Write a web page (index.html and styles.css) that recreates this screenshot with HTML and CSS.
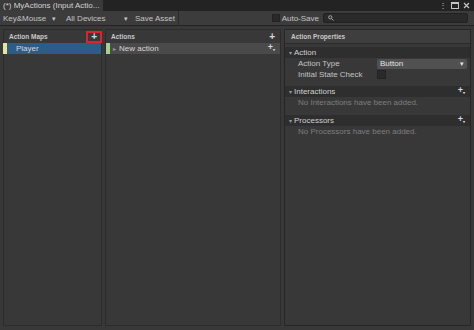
FILE: index.html
```html
<!DOCTYPE html>
<html lang="en">
<head>
    <meta charset="UTF-8">
    <title>MyActions (Input Actions)</title>
    <link rel="stylesheet" href="styles.css">
</head>
<body>
    <div class="window">
        <div class="tabbar">
            <div class="tab">(*) MyActions (Input Actio...</div>
            <div class="tab-icons">
                <span class="dots">&#8942;</span>
                <svg width="8" height="7" viewBox="0 0 8 7"><rect x="0.5" y="0.5" width="7" height="6" fill="none" stroke="#c4c4c4"/><rect x="0.5" y="0.5" width="7" height="1.5" fill="#c4c4c4"/></svg>
                <svg width="7" height="7" viewBox="0 0 7 7"><path d="M1 1L6 6M6 1L1 6" stroke="#c4c4c4" stroke-width="1.2"/></svg>
            </div>
        </div>
        <div class="toolbar">
            <div class="tool-drop scheme">Key&amp;Mouse <span class="caret">&#9662;</span></div>
            <div class="tool-drop devices">All Devices <span class="caret">&#9662;</span></div>
            <div class="tool-btn">Save Asset</div>
            <div class="spacer"></div>
            <div class="autosave"><span class="check"></span>Auto-Save</div>
            <div class="search">
                <svg width="6" height="6" viewBox="0 0 6 6"><circle cx="2.3" cy="2.3" r="1.6" fill="none" stroke="#aaa"/><path d="M3.5 3.5L5.5 5.5" stroke="#aaa"/></svg>
            </div>
        </div>
        <div class="panes">
            <div class="pane maps">
                <div class="pane-head">
                    <span>Action Maps</span>
                    <span class="plus boxed">+</span>
                </div>
                <div class="row selected">
                    <span class="mark yellow"></span>
                    <span class="row-label">Player</span>
                </div>
            </div>
            <div class="pane actions">
                <div class="pane-head">
                    <span>Actions</span>
                    <span class="plus">+</span>
                </div>
                <div class="row action-row">
                    <span class="mark green"></span>
                    <span class="arrow">&#9656;</span>
                    <span class="row-label">New action</span>
                    <span class="plus small">+<sub>&#9662;</sub></span>
                </div>
            </div>
            <div class="pane props">
                <div class="props-head">Action Properties</div>
                <div class="fold-head top"><span class="arrow">&#9662;</span>Action</div>
                <div class="field">
                    <span class="field-label">Action Type</span>
                    <div class="select">Button <span class="caret">&#9662;</span></div>
                </div>
                <div class="field">
                    <span class="field-label">Initial State Check</span>
                    <span class="check box"></span>
                </div>
                <div class="fold-head first"><span class="arrow">&#9662;</span>Interactions<span class="plus small">+<sub>&#9662;</sub></span></div>
                <div class="empty">No Interactions have been added.</div>
                <div class="fold-head"><span class="arrow">&#9662;</span>Processors<span class="plus small">+<sub>&#9662;</sub></span></div>
                <div class="empty">No Processors have been added.</div>
            </div>
        </div>
    </div>
</body>
</html>
```

FILE: styles.css
```css
body {
    margin: 0;
    background-color: #383838;
    font-family: "Liberation Sans", Arial, sans-serif;
    font-size: 8px;
    color: #c4c4c4;
}
.window {
    width: 474px;
    height: 330px;
    display: flex;
    flex-direction: column;
    overflow: hidden;
}
.tabbar {
    height: 11px;
    background-color: #232323;
    display: flex;
    align-items: stretch;
}
.tab {
    width: 100px;
    padding-left: 3px;
    background-color: #3a3a3a;
    line-height: 11px;
    color: #d2d2d2;
    white-space: nowrap;
    overflow: hidden;
}
.tab-icons {
    margin-left: auto;
    display: flex;
    align-items: center;
    gap: 4px;
    padding-right: 4px;
}
.dots {
    font-size: 8px;
    line-height: 8px;
}
.toolbar {
    height: 14px;
    background-color: #3c3c3c;
    border-bottom: 1px solid #232323;
    display: flex;
    align-items: center;
    white-space: nowrap;
}
.tool-drop {
    position: relative;
    height: 14px;
    line-height: 15px;
}
.scheme {
    width: 57px;
    padding-left: 3px;
}
.devices {
    width: 66px;
    padding-left: 6px;
}
.caret {
    position: absolute;
    right: 4px;
    font-size: 7px;
}
.tool-btn {
    padding: 0 3px;
    width: 40px;
    line-height: 15px;
    border-right: 1px solid #2a2a2a;
}
.spacer {
    flex: 1;
}
.autosave {
    display: flex;
    align-items: center;
    gap: 2px;
    padding-right: 4px;
    line-height: 15px;
}
.check {
    display: inline-block;
    width: 8px;
    height: 8px;
    background-color: #2a2a2a;
    border: 1px solid #222;
    box-sizing: border-box;
}
.search {
    width: 145px;
    height: 10px;
    margin-right: 6px;
    background-color: #2a2a2a;
    border: 1px solid #212121;
    border-radius: 2px;
    display: flex;
    align-items: center;
    padding-left: 4px;
    box-sizing: border-box;
}
.panes {
    flex: 1;
    display: flex;
    gap: 3px;
    padding: 3px 3px 4px 3px;
}
.pane {
    border: 1px solid #2c2c2c;
    background-color: #383838;
    display: flex;
    flex-direction: column;
}
.maps {
    width: 97px;
}
.actions {
    width: 174px;
}
.props {
    flex: 1;
    border-color: #262626;
}
.pane-head {
    height: 13px;
    display: flex;
    align-items: center;
    justify-content: space-between;
    padding: 0 5px;
    font-size: 6.5px;
    font-weight: bold;
    color: #c8c8c8;
}
.plus {
    font-size: 10px;
    font-weight: bold;
    line-height: 10px;
    color: #d8d8d8;
}
.plus.boxed {
    border: 2px solid #e0222a;
    padding: 0 3px;
    margin-right: -6px;
    line-height: 8px;
}
.plus.small {
    margin-left: auto;
    font-size: 9px;
}
.plus sub {
    font-size: 4px;
    vertical-align: -1px;
}
.row {
    height: 11px;
    display: flex;
    align-items: center;
}
.selected {
    background-color: #2c5d87;
    margin-left: -1px;
}
.mark {
    width: 4px;
    height: 11px;
}
.yellow {
    background-color: #e6e39a;
    margin-right: 9px;
}
.green {
    background-color: #a5d18c;
    margin-right: 3px;
}
.row-label {
    font-size: 8px;
    color: #d6d6d6;
}
.action-row {
    background-color: #4a4a4a;
    padding-right: 5px;
}
.arrow {
    font-size: 6px;
    color: #9a9a9a;
    margin-right: 3px;
}
.props-head {
    height: 13px;
    line-height: 13px;
    padding-left: 6px;
    background-color: #3e3e3e;
    border-bottom: 1px solid #2a2a2a;
    font-size: 6.5px;
    font-weight: bold;
    color: #c8c8c8;
}
.fold-head {
    height: 11px;
    margin-top: 4px;
    display: flex;
    align-items: center;
    padding: 0 5px 0 4px;
    background-color: #2e2e2e;
    color: #d0d0d0;
}
.fold-head.top {
    margin-top: 3px;
}
.fold-head.first {
    margin-top: 6px;
}
.fold-head .arrow {
    margin-right: 2px;
}
.field {
    height: 11px;
    display: flex;
    align-items: center;
    padding-left: 13px;
}
.field:first-of-type {
    margin-top: 1px;
}
.field-label {
    width: 79px;
}
.select {
    position: relative;
    flex: 1;
    margin-right: 3px;
    height: 10px;
    line-height: 10px;
    padding-left: 3px;
    background-color: #515151;
    border-radius: 2px;
    color: #e4e4e4;
}
.select .caret {
    right: 3px;
}
.check.box {
    width: 9px;
    height: 9px;
}
.empty {
    height: 14px;
    line-height: 12px;
    padding-left: 13px;
    color: #7e7e7e;
}
```
